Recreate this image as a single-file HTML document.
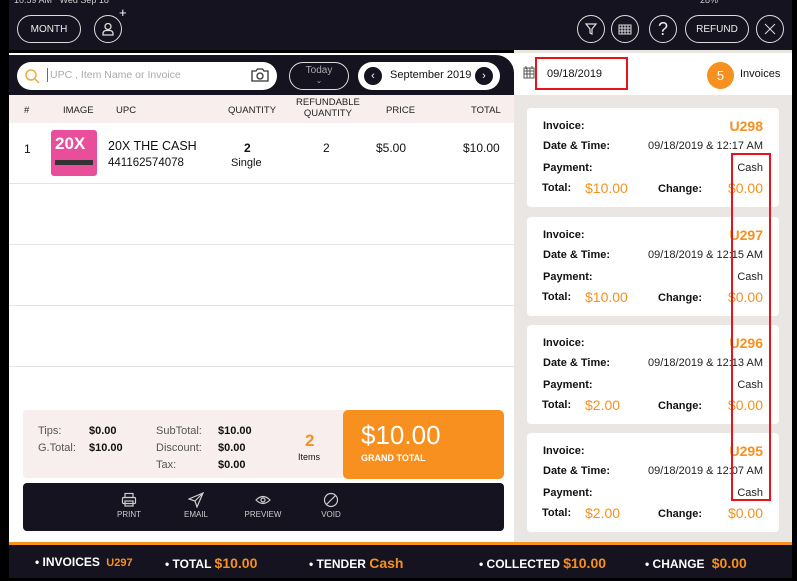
<!DOCTYPE html>
<html><head><meta charset="utf-8"><style>
*{margin:0;padding:0;box-sizing:border-box}
body{width:797px;height:581px;overflow:hidden;background:#000;font-family:"Liberation Sans",sans-serif;position:relative;color:#111}
.a{position:absolute}
.top{left:9px;top:0;width:783px;height:50px;background:#15131f}
.btn{border:1.5px solid #ddd;border-radius:16px;color:#eee;font-size:10px;display:flex;align-items:center;justify-content:center}
.circ{border:1.5px solid #ddd;border-radius:50%;color:#eee;display:flex;align-items:center;justify-content:center}
.lp{left:9px;top:53px;width:505px;height:489px;background:#fff}
.rp{left:514px;top:50px;width:278px;height:492px;background:#e9e6e4}
.card{left:527px;width:252px;height:99px;background:#fff;border-radius:4px;font-size:11px}
.card .l{position:absolute;left:16px;font-weight:bold;color:#111}
.card .r{position:absolute;right:16px;color:#222}
.card .or,.or{color:#f7901e}
.th{font-size:9.5px;color:#222;text-align:center}
.line{left:9px;width:505px;height:1px;background:#e4e4e4}
.bot{left:9px;top:542px;width:783px;height:36px;background:#15131f;border-top:3px solid #f7901e;color:#fff;font-size:12px;font-weight:bold}
.bot span{position:absolute;top:10px;white-space:nowrap}
.ic{color:#ccc;font-size:8px;text-align:center;width:50px}
</style></head><body>
<div class="a top"></div>
<div class="a" style="left:14px;top:-5px;color:#ccc;font-size:9px">10:59 AM &nbsp; Wed Sep 18</div>
<div class="a" style="left:700px;top:-5px;color:#ccc;font-size:9px">28%</div>
<div class="a btn" style="left:17px;top:15px;width:64px;height:28px">MONTH</div>
<div class="a circ" style="left:94px;top:15px;width:28px;height:28px"><svg width="16" height="16" viewBox="0 0 16 16" fill="none" stroke="#ddd" stroke-width="1.3"><circle cx="8" cy="5.5" r="3"/><path d="M3 14v-1.5a3 3 0 0 1 3-3h4a3 3 0 0 1 3 3V14z"/></svg></div>
<div class="a" style="left:119px;top:5px;color:#fff;font-size:13px">+</div>
<div class="a circ" style="left:577px;top:15px;width:28px;height:28px"><svg width="14" height="14" viewBox="0 0 14 14" fill="none" stroke="#ddd" stroke-width="1.2"><path d="M2 2h10L8 7v5l-2-1V7z"/></svg></div>
<div class="a circ" style="left:611px;top:15px;width:28px;height:28px"><svg width="14" height="12" viewBox="0 0 14 12" fill="none" stroke="#ddd" stroke-width="1"><rect x="1" y="2" width="12" height="9"/><path d="M1 5h12M1 8h12M4 2v9M7 2v9M10 2v9"/></svg></div>
<div class="a circ" style="left:649px;top:15px;width:28px;height:28px;font-size:18px">?</div>
<div class="a btn" style="left:685px;top:15px;width:64px;height:28px">REFUND</div>
<div class="a circ" style="left:756px;top:15px;width:28px;height:28px"><svg width="14" height="14" viewBox="0 0 14 14" fill="none" stroke="#ddd" stroke-width="1"><path d="M2 2l10 10M12 2L2 12"/></svg></div>

<div class="a lp"></div>
<div class="a" style="left:9px;top:55px;width:505px;height:40px;background:#15131f;border-top-right-radius:18px"></div>
<div class="a" style="left:17px;top:62px;width:260px;height:28px;background:#fff;border-radius:14px"></div>
<svg class="a" style="left:24px;top:68px" width="16" height="16" viewBox="0 0 16 16" fill="none" stroke="#f7a93a" stroke-width="1.5"><circle cx="7" cy="7" r="5"/><path d="M11 11l4 4"/></svg>
<div class="a" style="left:47px;top:68px;width:1px;height:14px;background:#3a6fd8"></div>
<div class="a" style="left:50px;top:69px;font-size:10.5px;color:#aaa">UPC , Item Name or Invoice</div>
<svg class="a" style="left:251px;top:67px" width="18" height="16" viewBox="0 0 18 16" fill="none" stroke="#333" stroke-width="1.3"><path d="M1 4h4l1.5-2h5L13 4h4v10H1z"/><circle cx="9" cy="9" r="3"/></svg>
<div class="a btn" style="left:289px;top:62px;width:60px;height:28px;color:#aaa;flex-direction:column;line-height:10px">Today<span style="font-size:8px">⌄</span></div>
<div class="a" style="left:358px;top:62px;width:142px;height:28px;background:#fff;border-radius:14px"></div>
<div class="a" style="left:364px;top:67px;width:18px;height:18px;border-radius:50%;background:#15131f;color:#fff;font-size:11px;text-align:center;line-height:18px">‹</div>
<div class="a" style="left:390px;top:69px;font-size:11px">September 2019</div>
<div class="a" style="left:475px;top:67px;width:18px;height:18px;border-radius:50%;background:#15131f;color:#fff;font-size:11px;text-align:center;line-height:18px">›</div>

<div class="a" style="left:9px;top:95px;width:505px;height:28px;background:#f8eeee"></div>
<div class="a th" style="left:24px;top:105px">#</div>
<div class="a th" style="left:63px;top:105px">IMAGE</div>
<div class="a th" style="left:116px;top:105px">UPC</div>
<div class="a th" style="left:228px;top:105px">QUANTITY</div>
<div class="a th" style="left:296px;top:97px;line-height:11px">REFUNDABLE<br>QUANTITY</div>
<div class="a th" style="left:386px;top:105px">PRICE</div>
<div class="a th" style="left:471px;top:105px">TOTAL</div>

<div class="a" style="left:24px;top:142px;font-size:12px">1</div>
<div class="a" style="left:51px;top:130px;width:46px;height:46px;background:#e94e9a;border-radius:3px;color:#fff;font-weight:bold;font-size:17px;padding:4px 0 0 4px;overflow:hidden">20X<div style="font-size:4px;background:#333;margin-top:6px;width:38px">&nbsp;</div></div>
<div class="a" style="left:108px;top:139px;font-size:12.5px">20X THE CASH</div>
<div class="a" style="left:108px;top:157px;font-size:11.5px">441162574078</div>
<div class="a" style="left:244px;top:141px;font-size:12px;font-weight:bold">2</div>
<div class="a" style="left:231px;top:157px;font-size:11px">Single</div>
<div class="a" style="left:323px;top:141px;font-size:12px">2</div>
<div class="a" style="left:376px;top:141px;font-size:12px">$5.00</div>
<div class="a" style="left:463px;top:141px;font-size:12px">$10.00</div>
<div class="a line" style="top:183px"></div>
<div class="a line" style="top:244px"></div>
<div class="a line" style="top:305px"></div>
<div class="a line" style="top:366px"></div>

<div class="a" style="left:23px;top:410px;width:330px;height:68px;background:#f8eeee;border-radius:4px;font-size:11px"></div>
<div class="a" style="left:38px;top:423px;font-size:11px;color:#555;line-height:17px">Tips:<br>G.Total:</div>
<div class="a" style="left:89px;top:423px;font-size:11px;font-weight:bold;line-height:17px">$0.00<br>$10.00</div>
<div class="a" style="left:156px;top:423px;font-size:11px;color:#555;line-height:17px">SubTotal:<br>Discount:<br>Tax:</div>
<div class="a" style="left:218px;top:423px;font-size:11px;font-weight:bold;line-height:17px">$10.00<br>$0.00<br>$0.00</div>
<div class="a or" style="left:305px;top:431px;font-size:17px;font-weight:bold">2</div>
<div class="a" style="left:298px;top:452px;font-size:9px">Items</div>
<div class="a" style="left:343px;top:410px;width:161px;height:69px;background:#f7901e;border-radius:5px;color:#fff"><div style="position:absolute;left:18px;top:10px;font-size:26px">$10.00</div><div style="position:absolute;left:18px;top:43px;font-size:9px;font-weight:bold">GRAND TOTAL</div></div>
<div class="a" style="left:23px;top:483px;width:481px;height:48px;background:#15131f;border-radius:4px"></div>
<div class="a ic" style="left:104px;top:492px"><svg width="16" height="16" viewBox="0 0 16 16" fill="none" stroke="#ccc" stroke-width="1.2"><rect x="4" y="1.5" width="8" height="4"/><rect x="1.5" y="5.5" width="13" height="6" rx="1"/><rect x="4" y="9" width="8" height="5"/></svg><br>PRINT</div>
<div class="a ic" style="left:171px;top:492px"><svg width="16" height="16" viewBox="0 0 16 16" fill="none" stroke="#ccc" stroke-width="1.2"><path d="M15 1L1 7l6 2 2 6z M15 1L7 9"/></svg><br>EMAIL</div>
<div class="a ic" style="left:238px;top:492px"><svg width="16" height="16" viewBox="0 0 16 16" fill="none" stroke="#ccc" stroke-width="1.2"><path d="M1 8q7-7 14 0q-7 7-14 0z"/><circle cx="8" cy="8" r="2"/></svg><br>PREVIEW</div>
<div class="a ic" style="left:306px;top:492px"><svg width="16" height="16" viewBox="0 0 16 16" fill="none" stroke="#ccc" stroke-width="1.2"><circle cx="8" cy="8" r="6.5"/><path d="M3.5 12.5l9-9"/></svg><br>VOID</div>

<div class="a rp"></div>
<div class="a" style="left:514px;top:53px;width:278px;height:42px;background:#fff"></div>
<svg class="a" style="left:523px;top:66px" width="12" height="13" viewBox="0 0 12 13" fill="none" stroke="#555" stroke-width="1"><rect x="1" y="2" width="10" height="10"/><path d="M1 5h10M1 8h10M4 2v10M7 2v10M3 0v3M9 0v3"/></svg>
<div class="a" style="left:547px;top:68px;font-size:11px">09/18/2019</div>
<div class="a" style="left:535px;top:57px;width:93px;height:33px;border:2.5px solid #e8141b"></div>
<div class="a" style="left:707px;top:62px;width:27px;height:27px;border-radius:50%;background:#f7901e;color:#fff;font-size:13px;text-align:center;line-height:27px">5</div>
<div class="a" style="left:740px;top:68px;font-size:11px">Invoices</div>

<div class="a card" style="top:108px"><span class="l" style="top:12px">Invoice:</span><span class="r or" style="top:10px;font-size:14px;font-weight:bold">U298</span><span class="l" style="top:32px">Date &amp; Time:</span><span class="r" style="top:32px">09/18/2019 &amp; 12:17 AM</span><span class="l" style="top:54px">Payment:</span><span class="r" style="top:54px">Cash</span><span class="l" style="top:74px;left:15px">Total:</span><span class="a or" style="left:58px;top:72px;font-size:14px">$10.00</span><span class="l" style="top:75px;left:131px">Change:</span><span class="r or" style="top:72px;font-size:14px">$0.00</span></div>
<div class="a card" style="top:217px"><span class="l" style="top:12px">Invoice:</span><span class="r or" style="top:10px;font-size:14px;font-weight:bold">U297</span><span class="l" style="top:32px">Date &amp; Time:</span><span class="r" style="top:32px">09/18/2019 &amp; 12:15 AM</span><span class="l" style="top:54px">Payment:</span><span class="r" style="top:54px">Cash</span><span class="l" style="top:74px;left:15px">Total:</span><span class="a or" style="left:58px;top:72px;font-size:14px">$10.00</span><span class="l" style="top:75px;left:131px">Change:</span><span class="r or" style="top:72px;font-size:14px">$0.00</span></div>
<div class="a card" style="top:325px"><span class="l" style="top:12px">Invoice:</span><span class="r or" style="top:10px;font-size:14px;font-weight:bold">U296</span><span class="l" style="top:32px">Date &amp; Time:</span><span class="r" style="top:32px">09/18/2019 &amp; 12:13 AM</span><span class="l" style="top:54px">Payment:</span><span class="r" style="top:54px">Cash</span><span class="l" style="top:74px;left:15px">Total:</span><span class="a or" style="left:58px;top:72px;font-size:14px">$2.00</span><span class="l" style="top:75px;left:131px">Change:</span><span class="r or" style="top:72px;font-size:14px">$0.00</span></div>
<div class="a card" style="top:433px"><span class="l" style="top:12px">Invoice:</span><span class="r or" style="top:10px;font-size:14px;font-weight:bold">U295</span><span class="l" style="top:32px">Date &amp; Time:</span><span class="r" style="top:32px">09/18/2019 &amp; 12:07 AM</span><span class="l" style="top:54px">Payment:</span><span class="r" style="top:54px">Cash</span><span class="l" style="top:74px;left:15px">Total:</span><span class="a or" style="left:58px;top:72px;font-size:14px">$2.00</span><span class="l" style="top:75px;left:131px">Change:</span><span class="r or" style="top:72px;font-size:14px">$0.00</span></div>
<div class="a" style="left:731px;top:153px;width:40px;height:348px;border:2.5px solid #e8141b"></div>

<div class="a bot">
<span style="left:26px">• INVOICES <b class="or" style="font-size:11px">&nbsp;U297</b></span>
<span style="left:156px">• TOTAL <b class="or" style="font-size:14px">$10.00</b></span>
<span style="left:300px">• TENDER <b class="or" style="font-size:14px">Cash</b></span>
<span style="left:470px">• COLLECTED <b class="or" style="font-size:14px">$10.00</b></span>
<span style="left:636px">• CHANGE <b class="or" style="font-size:14px">&nbsp;$0.00</b></span>
</div>
</body></html>
